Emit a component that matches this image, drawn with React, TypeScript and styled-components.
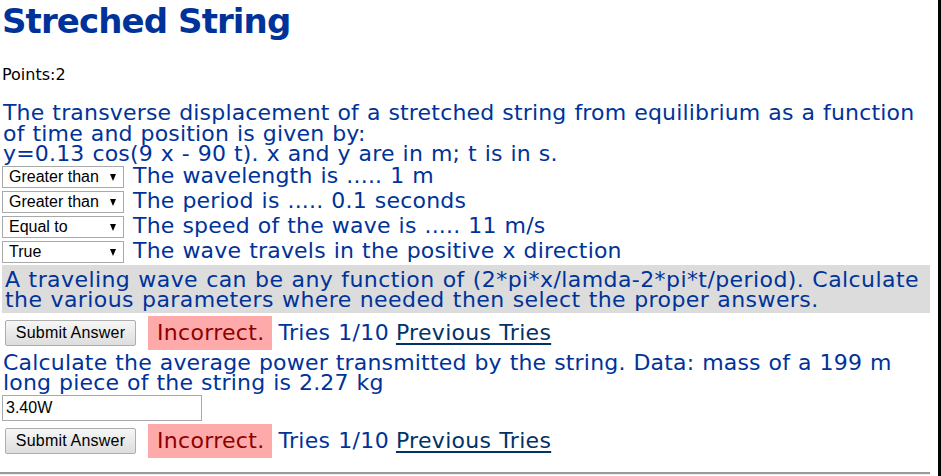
import React from "react";
import styled, { createGlobalStyle } from "styled-components";

const GlobalStyle = createGlobalStyle`
  html, body {
    margin: 0;
    padding: 0;
    background: #fff;
  }
`;

const Page = styled.div`
  box-sizing: border-box;
  width: 941px;
  height: 476px;
  overflow: hidden;
  border-right: 3px solid #000;
  padding: 0 8px 0 2px;
  font-family: "DejaVu Sans", Verdana, sans-serif;
  color: #003399;
`;

const Title = styled.h1`
  margin: 1px 0 0 0;
  font-size: 34px;
  line-height: 40px;
  letter-spacing: -0.9px;
  font-weight: bold;
  color: #003399;
`;

const Points = styled.div`
  margin-top: 24px;
  font-size: 16px;
  line-height: 20px;
  color: #000;
`;

const Text = styled.div`
  font-size: 22px;
  line-height: 20.5px;
  letter-spacing: 0.18px;
  word-spacing: 0.7px;
  white-space: nowrap;
`;

const Question = styled(Text)`
  margin-top: 18px;
  padding-left: 1px;
`;

const Row = styled.div`
  display: flex;
  align-items: flex-start;
  gap: 9px;
  height: 25px;
`;

const RowText = styled.span`
  font-size: 22px;
  line-height: 22px;
  letter-spacing: 0.2px;
  word-spacing: 0.7px;
  white-space: nowrap;
`;

const SelectWrap = styled.span`
  position: relative;
  display: inline-block;
  margin-top: 1px;
`;

const Select = styled.select`
  appearance: none;
  display: block;
  box-sizing: border-box;
  width: 122px;
  height: 22px;
  margin: 0;
  padding: 0 0 0 6px;
  border: 1px solid #a9a9a9;
  border-radius: 0;
  background: #fff;
  color: #000;
  font-family: "Liberation Sans", Arial, sans-serif;
  font-size: 16px;
`;

const Arrow = styled.span`
  position: absolute;
  right: 8px;
  top: 8px;
  width: 0;
  height: 0;
  border-left: 3.5px solid transparent;
  border-right: 3.5px solid transparent;
  border-top: 7px solid #000;
  pointer-events: none;
`;

const Hint = styled(Text)`
  box-sizing: border-box;
  background: #dcdcdc;
  line-height: 20px;
  letter-spacing: 0.42px;
  padding: 5px 2px 3px 3px;
  height: 48px;
`;

const ResultRow = styled.div<{ top: number }>`
  display: flex;
  align-items: center;
  font-size: 22px;
  letter-spacing: 0.3px;
  word-spacing: 0.7px;
  white-space: nowrap;
  margin: ${(p) => p.top}px 0 0 0;
`;

const Button = styled.button`
  box-sizing: border-box;
  width: 131px;
  height: 26px;
  margin: 0 12px 0 3px;
  padding: 0;
  border: 1px solid #adadad;
  border-radius: 2px;
  background: linear-gradient(#f6f6f6, #dddddd);
  color: #000;
  font-family: "Liberation Sans", Arial, sans-serif;
  font-size: 16px;
  letter-spacing: 0.2px;
  word-spacing: 0;
`;

const Badge = styled.span`
  box-sizing: border-box;
  height: 34px;
  line-height: 34px;
  padding: 0 8px 0 9px;
  background: #ffaaaa;
  color: #8b0000;
`;

const Tries = styled.span`
  margin-left: 6px;
`;

const Link = styled.a`
  margin-left: 7px;
  color: #003366;
  text-decoration: underline;
  text-underline-offset: 3px;
`;

const Power = styled(Text)`
  margin-top: 3px;
  padding-left: 1px;
`;

const Input = styled.input`
  display: block;
  box-sizing: border-box;
  width: 200px;
  height: 26px;
  margin: 1px 0 0 0;
  padding: 0 3px;
  border: 1px solid #a9a9a9;
  color: #000;
  font-family: "Liberation Sans", Arial, sans-serif;
  font-size: 16px;
`;

const Rule = styled.hr`
  margin: 14px 0 0 -2px;
  border: 0;
  border-top: 2px solid #9a9a9a;
  border-bottom: 1px solid #eee;
  height: 0;
`;

const rows = [
  { value: "Greater than", text: "The wavelength is ..... 1 m" },
  { value: "Greater than", text: "The period is ..... 0.1 seconds" },
  { value: "Equal to", text: "The speed of the wave is ..... 11 m/s" },
  { value: "True", text: "The wave travels in the positive x direction" },
];

const options = ["Greater than", "Less than", "Equal to", "True", "False"];

const Result = ({ top }: { top: number }) => (
  <ResultRow top={top}>
    <Button>Submit Answer</Button>
    <Badge>Incorrect.</Badge>
    <Tries>Tries 1/10</Tries>
    <Link href="#">Previous Tries</Link>
  </ResultRow>
);

export default function App() {
  return (
    <Page>
      <GlobalStyle />
      <Title>Streched String</Title>
      <Points>Points:2</Points>
      <Question>
        The transverse displacement of a stretched string from equilibrium as a function
        <br />
        of time and position is given by:
        <br />
        y=0.13 cos(9 x - 90 t). x and y are in m; t is in s.
      </Question>
      {rows.map((r, i) => (
        <Row key={i}>
          <SelectWrap>
            <Select defaultValue={r.value}>
              {options.map((o) => (
                <option key={o}>{o}</option>
              ))}
            </Select>
            <Arrow />
          </SelectWrap>
          <RowText>{r.text}</RowText>
        </Row>
      ))}
      <Hint>
        A traveling wave can be any function of (2*pi*x/lamda-2*pi*t/period). Calculate
        <br />
        the various parameters where needed then select the proper answers.
      </Hint>
      <Result top={3} />
      <Power>
        Calculate the average power transmitted by the string. Data: mass of a 199 m
        <br />
        long piece of the string is 2.27 kg
      </Power>
      <Input defaultValue="3.40W" />
      <Result top={3} />
      <Rule />
    </Page>
  );
}
